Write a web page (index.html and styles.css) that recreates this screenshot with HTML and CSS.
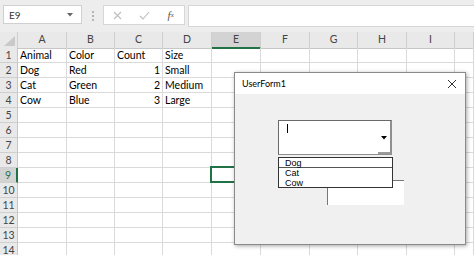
FILE: index.html
```html
<!DOCTYPE html>
<html lang="en">
<head>
  <meta charset="UTF-8">
  <title>Excel - UserForm1</title>
  <link rel="stylesheet" href="styles.css">
</head>
<body>

<div class="excel">
  <div class="toolbar">
    <div class="namebox">
      <span>E9</span>
      <svg class="nb-arrow" width="6" height="4" viewBox="0 0 6 4"><path d="M0 0h6L3 3.5z" fill="#666"/></svg>
    </div>
    <div class="grip"><i></i><i></i><i></i></div>
    <div class="fxbox">
      <span class="slot"><svg width="9" height="9" viewBox="0 0 9 9"><path d="M1 1l7 7M8 1L1 8" stroke="#bdbdbd" stroke-width="1.1"/></svg></span>
      <span class="slot"><svg width="11" height="9" viewBox="0 0 11 9"><path d="M1 5l3 3 6-7" stroke="#bdbdbd" stroke-width="1.1" fill="none"/></svg></span>
      <span class="slot fx">f<sub>x</sub></span>
    </div>
    <div class="formula"></div>
  </div>

  <div class="sheet">
    <div class="row head">
      <div class="corner"><svg width="11" height="10" viewBox="0 0 11 10"><path d="M11 0v10H0z" fill="#c9c9c9"/></svg></div>
      <div>A</div><div>B</div><div>C</div><div>D</div><div class="sel">E</div><div>F</div><div>G</div><div>H</div><div>I</div><div></div>
    </div>
    <div class="row"><div class="rh">1</div><div>Animal</div><div>Color</div><div>Count</div><div>Size</div><div></div><div></div><div></div><div></div><div></div><div></div></div>
    <div class="row"><div class="rh">2</div><div>Dog</div><div>Red</div><div class="num">1</div><div>Small</div><div></div><div></div><div></div><div></div><div></div><div></div></div>
    <div class="row"><div class="rh">3</div><div>Cat</div><div>Green</div><div class="num">2</div><div>Medium</div><div></div><div></div><div></div><div></div><div></div><div></div></div>
    <div class="row"><div class="rh">4</div><div>Cow</div><div>Blue</div><div class="num">3</div><div>Large</div><div></div><div></div><div></div><div></div><div></div><div></div></div>
    <div class="row"><div class="rh">5</div><div></div><div></div><div></div><div></div><div></div><div></div><div></div><div></div><div></div><div></div></div>
    <div class="row"><div class="rh">6</div><div></div><div></div><div></div><div></div><div></div><div></div><div></div><div></div><div></div><div></div></div>
    <div class="row"><div class="rh">7</div><div></div><div></div><div></div><div></div><div></div><div></div><div></div><div></div><div></div><div></div></div>
    <div class="row"><div class="rh">8</div><div></div><div></div><div></div><div></div><div></div><div></div><div></div><div></div><div></div><div></div></div>
    <div class="row"><div class="rh sel">9</div><div></div><div></div><div></div><div></div><div class="active"></div><div></div><div></div><div></div><div></div><div></div></div>
    <div class="row"><div class="rh">10</div><div></div><div></div><div></div><div></div><div></div><div></div><div></div><div></div><div></div><div></div></div>
    <div class="row"><div class="rh">11</div><div></div><div></div><div></div><div></div><div></div><div></div><div></div><div></div><div></div><div></div></div>
    <div class="row"><div class="rh">12</div><div></div><div></div><div></div><div></div><div></div><div></div><div></div><div></div><div></div><div></div></div>
    <div class="row"><div class="rh">13</div><div></div><div></div><div></div><div></div><div></div><div></div><div></div><div></div><div></div><div></div></div>
    <div class="row"><div class="rh">14</div><div></div><div></div><div></div><div></div><div></div><div></div><div></div><div></div><div></div><div></div></div>
  </div>

  <div class="userform">
    <div class="uf-title">
      <span>UserForm1</span>
      <svg width="10" height="10" viewBox="0 0 10 10"><path d="M1 1l8 8M9 1L1 9" stroke="#333" stroke-width="1"/></svg>
    </div>
    <div class="uf-body">
      <div class="textbox"></div>
      <div class="combo">
        <i class="caret"></i>
        <div class="combo-btn"><svg width="6" height="4" viewBox="0 0 6 4"><path d="M0 0h6L3 3.5z" fill="#000"/></svg></div>
      </div>
      <div class="combo-list">
        <div class="item focus">Dog</div>
        <div class="item">Cat</div>
        <div class="item">Cow</div>
      </div>
    </div>
  </div>
</div>

</body>
</html>
```

FILE: styles.css
```css
body {
  margin: 0;
  padding: 0;
  width: 474px;
  height: 255px;
  overflow: hidden;
  background-color: #fff;
  font-family: Lato, 'Liberation Sans', sans-serif;
}

.excel {
  position: relative;
  width: 474px;
  height: 255px;
  overflow: hidden;
}

/* Formula bar */
.toolbar {
  height: 32px;
  box-sizing: border-box;
  padding: 5px 0 0 3px;
  background-color: #ededed;
  display: flex;
  align-items: flex-start;
}

.namebox {
  width: 79px;
  height: 19px;
  box-sizing: border-box;
  background-color: #fff;
  border: 1px solid #d0d0d0;
  display: flex;
  align-items: center;
  justify-content: space-between;
  padding: 0 8px 0 5px;
  font-size: 10px;
  color: #333;
}

.grip {
  width: 21px;
  padding-top: 6px;
  display: flex;
  flex-direction: column;
  align-items: center;
  gap: 2px;
}

.grip i {
  width: 2px;
  height: 2px;
  background-color: #b5b5b5;
}

.fxbox {
  width: 82px;
  height: 20px;
  box-sizing: border-box;
  background-color: #fff;
  border: 1px solid #d6d6d6;
  display: flex;
}

.fxbox .slot {
  width: 27px;
  display: flex;
  align-items: center;
  justify-content: center;
}

.fxbox .fx {
  font-family: 'Liberation Serif', serif;
  font-style: italic;
  font-size: 11px;
  color: #555;
}

.fxbox .fx sub {
  font-size: 7px;
}

.formula {
  flex: 1;
  height: 20px;
  margin-left: 3px;
  background-color: #fff;
  border: 1px solid #d6d6d6;
  border-right: none;
}

/* Grid */
.row {
  display: grid;
  grid-template-columns: 18px 49px 48px 48px 49px 49px 49px 48px 49px 48px 1fr;
  height: 15px;
  font-size: 10.5px;
  color: #000;
}

.row > div {
  box-sizing: border-box;
  border-right: 1px solid #dadada;
  border-bottom: 1px solid #dadada;
  padding: 0 2px;
  line-height: 14px;
  white-space: nowrap;
  position: relative;
}

.row > .num {
  text-align: right;
}

.row.head {
  height: 16px;
}

.row.head > div {
  background-color: #e9e9e9;
  border-right-color: #cfcfcf;
  border-bottom: 1px solid #c6c6c6;
  text-align: center;
  color: #444;
  line-height: 15px;
}

.row.head > .sel {
  background-color: #d3d3d3;
  border-bottom: 2px solid #217346;
}

.row.head > .corner {
  display: flex;
  align-items: flex-end;
  justify-content: flex-end;
  padding: 0 2px 2px 0;
}

.row > .rh {
  background-color: #e9e9e9;
  border-right-color: #c6c6c6;
  border-bottom-color: #cfcfcf;
  text-align: center;
  color: #444;
  padding: 0;
}

.row > .rh.sel {
  background-color: #d3d3d3;
  border-right: 2px solid #217346;
  color: #217346;
}

.row > .active::after {
  content: '';
  position: absolute;
  top: -2px;
  left: -2px;
  right: -1px;
  bottom: -1px;
  border: 2px solid #217346;
}

/* UserForm window */
.userform {
  position: absolute;
  left: 234px;
  top: 72px;
  width: 232px;
  height: 173px;
  box-sizing: border-box;
  border: 1px solid #8a8a8a;
  box-shadow: 1px 1px 4px rgba(0, 0, 0, 0.35);
  background-color: #f0f0f0;
  display: flex;
  flex-direction: column;
}

.uf-title {
  height: 21px;
  background-color: #fff;
  display: flex;
  align-items: center;
  justify-content: space-between;
  padding: 0 8px 0 7px;
  font-size: 9px;
  color: #000;
}

.uf-body {
  flex: 1;
  position: relative;
}

.combo {
  position: absolute;
  left: 43px;
  top: 26px;
  width: 114px;
  height: 35px;
  box-sizing: border-box;
  background-color: #fff;
  border: 1px solid #8f8f8f;
  border-top-color: #6a6a6a;
  border-left-color: #6a6a6a;
}

.combo .caret {
  position: absolute;
  left: 8px;
  top: 3px;
  width: 1px;
  height: 9px;
  background-color: #000;
}

.combo-btn {
  position: absolute;
  right: 0;
  top: 0;
  bottom: 0;
  width: 13px;
  box-sizing: border-box;
  border-right: 1px solid #8f8f8f;
  border-bottom: 2px solid #9a9a9a;
  display: flex;
  align-items: center;
  justify-content: center;
  padding-top: 2px;
}

.combo-list {
  position: absolute;
  left: 43px;
  top: 63px;
  width: 115px;
  height: 31px;
  box-sizing: border-box;
  background-color: #fff;
  border: 1px solid #333;
  font-family: 'Liberation Sans', sans-serif;
  font-size: 9px;
  color: #000;
  z-index: 1;
}

.combo-list .item {
  height: 10px;
  line-height: 10px;
  padding-left: 6px;
  box-sizing: border-box;
}

.combo-list .item.focus {
  border-bottom: 1px solid #555;
}

.textbox {
  position: absolute;
  left: 92px;
  top: 86px;
  width: 77px;
  height: 25px;
  box-sizing: border-box;
  background-color: #fff;
  border-top: 1px solid #777;
  border-left: 1px solid #777;
}
```
